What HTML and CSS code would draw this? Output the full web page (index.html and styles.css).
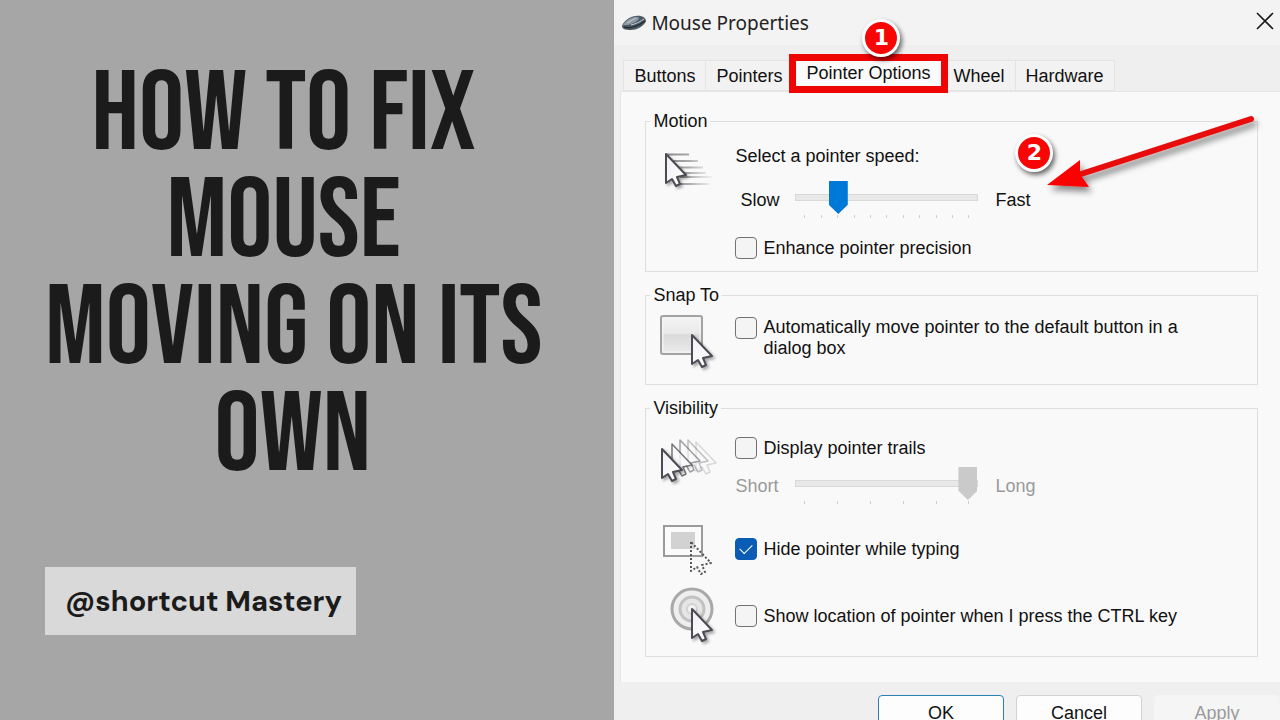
FILE: index.html
```html
<!DOCTYPE html>
<html lang="en">
<head>
<meta charset="utf-8">
<title>How to fix mouse moving on its own</title>
<link rel="stylesheet" href="styles.css">
</head>
<body>
<svg class="defs" aria-hidden="true">
  <defs>
    <linearGradient id="cursor-fill" x1="0" y1="0" x2="1" y2="1">
      <stop offset="0" stop-color="#f1f1f4"/><stop offset="1" stop-color="#ffffff"/>
    </linearGradient>
    <linearGradient id="plate-fill" x1="0" y1="0" x2="0" y2="1">
      <stop offset="0" stop-color="#f4f4f4"/><stop offset=".45" stop-color="#e9e9e9"/><stop offset=".5" stop-color="#dadada"/><stop offset="1" stop-color="#ececec"/>
    </linearGradient>
    <linearGradient id="streak" gradientUnits="userSpaceOnUse" x1="16" y1="0" x2="62" y2="0">
      <stop offset="0" stop-color="#888"/><stop offset=".5" stop-color="#aaa"/><stop offset="1" stop-color="#ccc" stop-opacity=".2"/>
    </linearGradient>
    <filter id="soft" x="-30%" y="-30%" width="170%" height="170%">
      <feDropShadow dx="2" dy="2" stdDeviation="1.5" flood-color="#000" flood-opacity=".35"/>
    </filter>
    <filter id="deep" x="-10%" y="-30%" width="130%" height="180%">
      <feDropShadow dx="3" dy="5" stdDeviation="3" flood-color="#000" flood-opacity=".45"/>
    </filter>
    <path id="cursor" d="M0 0V29L6 25L10 32L14 30L11 23L20 21Z" stroke-linejoin="round"/>
  </defs>
</svg>

<main class="stage">
  <section class="cover">
    <h1 class="headline">HOW TO FIX&nbsp;<br>MOUSE&nbsp;<br>MOVING ON ITS<br>OWN</h1>
    <p class="handle">@shortcut Mastery</p>
  </section>

  <section class="dialog" aria-label="Mouse Properties">
    <header class="titlebar">
      <svg class="app-icon" width="26" height="18" viewBox="0 0 26 18" aria-hidden="true">
        <path d="M1 12C2 8 9 2 15 2C21 1 25 4 25 7C24 11 17 16 10 16C4 16 1 15 1 12Z" fill="#4d5a66"/>
        <path d="M2 11C4 7 10 3 15 3C18 3 19 4 17 6C14 9 7 12 2 11Z" fill="#8d98a3"/>
        <path d="M6 9L15 4M10 11C15 10 20 7 23 5" stroke="#c5ccd3" stroke-width="1" fill="none"/>
        <path d="M3 13C9 15 18 12 24 7" stroke="#252c33" stroke-width="1.5" fill="none"/>
      </svg>
      <h2 class="title">Mouse Properties</h2>
      <button class="close" type="button" aria-label="Close">
        <svg width="18" height="18" viewBox="0 0 18 18" aria-hidden="true"><path d="M1 1L17 17M17 1L1 17" stroke="#1a1a1a" stroke-width="1.6"/></svg>
      </button>
    </header>

    <div class="tabs" role="tablist">
      <button class="tab" type="button" role="tab">Buttons</button>
      <button class="tab" type="button" role="tab">Pointers</button>
      <div class="tab-marked">
        <button class="tab tab-selected" type="button" role="tab" aria-selected="true">Pointer Options</button>
        <span class="badge badge-one">1</span>
      </div>
      <button class="tab" type="button" role="tab">Wheel</button>
      <button class="tab" type="button" role="tab">Hardware</button>
    </div>

    <div class="panel">
      <fieldset class="group">
        <legend>Motion</legend>
        <div class="row row-motion">
          <svg class="icon" viewBox="0 0 72 64" aria-hidden="true">
            <g stroke="url(#streak)" stroke-width="2">
              <path d="M17 15.500H39M20 22H48M24 28.500H53M28 34H56M30 38H62M28 45H59"/>
            </g>
            <use href="#cursor" x="16" y="15" fill="url(#cursor-fill)" stroke="#4c4c54" stroke-width="2" filter="url(#soft)"/>
          </svg>
          <div class="controls">
            <label class="line" for="speed">Select a pointer speed:</label>
            <div class="slider">
              <span class="slider-from indent">Slow</span>
              <div class="slider-body">
                <input id="speed" type="range" min="0" max="10" value="2">
                <div class="ticks"><i></i><i></i><i></i><i></i><i></i><i></i><i></i><i></i><i></i><i></i><i></i></div>
              </div>
              <span>Fast</span>
            </div>
            <label class="check check-after"><input type="checkbox"><span>Enhance pointer precision</span></label>
          </div>
        </div>
      </fieldset>

      <fieldset class="group">
        <legend>Snap To</legend>
        <div class="row row-snap">
          <svg class="icon" viewBox="0 0 72 64" aria-hidden="true">
            <rect x="11" y="6" width="41" height="38" rx="2" fill="url(#plate-fill)" stroke="#a3a3a3" stroke-width="2"/>
            <rect x="13" y="8" width="37" height="34" rx="1" fill="none" stroke="#f6f6f6"/>
            <use href="#cursor" x="42" y="25" fill="url(#cursor-fill)" stroke="#4c4c54" stroke-width="2" filter="url(#soft)"/>
          </svg>
          <div class="controls">
            <label class="check"><input type="checkbox"><span class="wrap">Automatically move pointer to the default button in a dialog box</span></label>
          </div>
        </div>
      </fieldset>

      <fieldset class="group">
        <legend>Visibility</legend>
        <div class="row row-trails">
          <svg class="icon" viewBox="0 0 72 64" aria-hidden="true">
            <g fill="#fafafa" stroke="#55555c" stroke-width="1.500">
              <use href="#cursor" x="46" y="12" opacity=".2"/>
              <use href="#cursor" x="38" y="10" opacity=".35"/>
              <use href="#cursor" x="30" y="10" opacity=".55"/>
              <use href="#cursor" x="22" y="14" opacity=".8"/>
            </g>
            <use href="#cursor" x="12" y="19" fill="url(#cursor-fill)" stroke="#4c4c54" stroke-width="2" filter="url(#soft)"/>
          </svg>
          <div class="controls">
            <label class="check"><input type="checkbox"><span>Display pointer trails</span></label>
            <div class="slider slider-off">
              <label class="slider-from" for="trails">Short</label>
              <div class="slider-body">
                <input id="trails" type="range" min="0" max="5" value="5" disabled>
                <div class="ticks"><i></i><i></i><i></i><i></i><i></i><i></i></div>
              </div>
              <span>Long</span>
            </div>
          </div>
        </div>
        <div class="row row-hide">
          <svg class="icon" viewBox="0 0 72 64" aria-hidden="true">
            <rect x="14" y="9" width="38" height="30" fill="#fbfbfb" stroke="#9b9b9b" stroke-width="2"/>
            <rect x="21" y="15" width="24" height="17" fill="#d2d2d2"/>
            <use href="#cursor" x="41" y="25" fill="none" stroke="#55555a" stroke-width="2" stroke-dasharray="2 2"/>
          </svg>
          <label class="check"><input type="checkbox" checked><span>Hide pointer while typing</span></label>
        </div>
        <div class="row row-locate">
          <svg class="icon" viewBox="0 0 72 64" aria-hidden="true">
            <circle cx="42" cy="25" r="20" fill="#eeeeee" stroke="#a9a9a9" stroke-width="3"/>
            <circle cx="42" cy="25" r="12" fill="#e6e6e6" stroke="#c2c2c2" stroke-width="3"/>
            <circle cx="42" cy="25" r="5" fill="#f2f2f2" stroke="#d2d2d2" stroke-width="2"/>
            <use href="#cursor" x="42" y="25" fill="url(#cursor-fill)" stroke="#4c4c54" stroke-width="2" filter="url(#soft)"/>
          </svg>
          <label class="check"><input type="checkbox"><span>Show location of pointer when I press the CTRL key</span></label>
        </div>
      </fieldset>

      <span class="badge badge-two">2</span>
      <svg class="arrow" width="230" height="100" viewBox="0 0 230 100" aria-hidden="true">
        <g filter="url(#deep)">
          <path d="M38 65L211 9" stroke="#e80c0c" stroke-width="6" stroke-linecap="round"/>
          <path d="M7 75L40 50L40 64L49 77Z" fill="#fb0505"/>
        </g>
      </svg>
    </div>

    <footer class="actions">
      <button class="action action-default" type="button">OK</button>
      <button class="action" type="button">Cancel</button>
      <button class="action" type="button" disabled>Apply</button>
    </footer>
  </section>
</main>
</body>
</html>
```

FILE: styles.css
```css
* {
  box-sizing: border-box;
}

body {
  margin: 0;
  font: 18px/20px "Liberation Sans", Arial, sans-serif;
  color: #111;
  background: #efefef;
}

button,
input {
  font: inherit;
  color: inherit;
}

.defs {
  position: absolute;
  width: 0;
  height: 0;
}

.stage {
  display: flex;
  height: 100vh;
  overflow: hidden;
}

.cover {
  flex: 0 0 48%;
  min-width: 0;
  padding: 62px 28px 0 45px;
  background: #a6a6a6;
  color: #1b1b1b;
}

.headline {
  margin: 0 46px 0 0;
  font: normal 113px/107px "Bebas Neue", "Liberation Sans", sans-serif;
  text-align: center;
  white-space: nowrap;
}

.handle {
  display: inline-block;
  margin: 77px 0 0;
  padding: 17px 14px 17px 20px;
  background: #d9d9d9;
  font: bold 29px/34px "DM Sans", Inter, "Liberation Sans", sans-serif;
  white-space: nowrap;
}

.dialog {
  flex: 1;
  min-width: 0;
  display: flex;
  flex-direction: column;
  background: #efefef;
}

.titlebar {
  flex: none;
  display: flex;
  align-items: center;
  gap: 4px;
  height: 45px;
  padding: 0 6px 0 7px;
  background: #f3f3f3;
}

.title {
  flex: 1;
  margin: 0;
  font: 19px/28px "Noto Sans", sans-serif;
  color: #222;
}

.close {
  display: flex;
  padding: 0 0 4px;
  border: 0;
  background: none;
}

.tabs {
  flex: none;
  display: flex;
  align-items: flex-end;
  height: 46px;
  padding-left: 9px;
}

.tab {
  height: 31px;
  padding: 0 10px;
  border: 1px solid #e4e4e4;
  border-left-width: 0;
  background: #f2f2f2;
  white-space: nowrap;
}

.tabs > .tab:first-child {
  border-left-width: 1px;
}

.tab-marked {
  position: relative;
  z-index: 1;
  margin: 0 -4px -2px;
}

.tab-selected {
  display: block;
  height: 39px;
  padding: 0 10px 2px;
  border: 7px solid #f00505;
  background: #fafafa;
}

.badge {
  position: absolute;
  display: flex;
  align-items: center;
  justify-content: center;
  width: 38px;
  height: 38px;
  border: 3px solid #fff;
  border-radius: 50%;
  background: #f80606;
  box-shadow: 2px 3px 5px rgba(0, 0, 0, 0.6);
  color: #fff;
  font: bold 22px/28px "DejaVu Sans", sans-serif;
}

.badge-one {
  left: 73px;
  top: -35px;
}

.badge-two {
  left: 394px;
  top: 42px;
}

.panel {
  position: relative;
  flex: none;
  display: flex;
  flex-direction: column;
  gap: 13px;
  margin-left: 6px;
  padding: 19px 22px 25px 24px;
  border: 1px solid #e6e6e6;
  border-width: 1px 0 0 1px;
  background: #f9f9f9;
}

.group {
  margin: 0;
  padding: 0 4px;
  border: 1px solid #dedede;
}

.group legend {
  padding: 0 3px;
}

.row {
  display: grid;
  grid-template-columns: 72px 1fr;
  column-gap: 13px;
}

.row-motion {
  padding: 8px 0 12px;
}

.row-snap {
  padding: 5px 0 10px;
}

.row-trails {
  padding: 12px 0 13px;
}

.row-hide,
.row-locate {
  align-items: center;
}

.row-hide {
  padding-bottom: 3px;
}

.row-locate {
  padding-bottom: 8px;
}

.icon {
  width: 72px;
  height: 64px;
}

.controls {
  display: flex;
  flex-direction: column;
  padding-top: 7px;
}

.slider {
  display: grid;
  grid-template-columns: 60px 183px auto;
  align-items: center;
  margin-top: 15px;
}

.slider > :last-child {
  padding-left: 17px;
}

.indent {
  padding-left: 5px;
}

.slider-off {
  margin-top: 8px;
  color: #9a9a9a;
}

input[type="range"] {
  appearance: none;
  display: block;
  width: 100%;
  height: 33px;
  margin: 0;
  background: none;
}

input[type="range"]::-webkit-slider-runnable-track {
  height: 7px;
  border: 1px solid #d9d9d9;
  background: #e8e8e8;
}

input[type="range"]::-webkit-slider-thumb {
  appearance: none;
  width: 19px;
  height: 33px;
  margin-top: -14px;
  background: #0078d7;
  clip-path: polygon(0 0, 100% 0, 100% 72%, 50% 100%, 0 72%);
}

input[type="range"]:disabled::-webkit-slider-thumb {
  background: #cacaca;
}

.ticks {
  display: flex;
  justify-content: space-between;
  padding: 1px 9px 0;
}

.ticks i {
  width: 1px;
  height: 3px;
  background: #cfcfcf;
}

.check {
  display: flex;
  align-items: flex-start;
  gap: 6px;
  line-height: 22px;
}

.check-after {
  margin-top: 19px;
}

.wrap {
  max-width: 440px;
  line-height: 21px;
}

input[type="checkbox"] {
  appearance: none;
  flex: none;
  display: grid;
  place-items: center;
  width: 22px;
  height: 22px;
  margin: 0;
  border: 1px solid #727272;
  border-radius: 4px;
  background: #f4f4f4;
}

input[type="checkbox"]:checked {
  border-color: #0a5cb4;
  background: #0a5cb4;
}

input[type="checkbox"]:checked::after {
  content: "";
  width: 11px;
  height: 6px;
  margin-bottom: 4px;
  border: solid #fff;
  border-width: 0 0 1px 1px;
  transform: rotate(-45deg);
}

.arrow {
  position: absolute;
  left: 419px;
  top: 18px;
}

.actions {
  flex: none;
  display: flex;
  justify-content: flex-end;
  gap: 12px;
  padding-top: 13px;
}

.action {
  width: 126px;
  height: 36px;
  border: 1px solid #d2d2d2;
  border-radius: 4px;
  background: #fdfdfd;
}

.action-default {
  border-color: #2a7fb5;
}

.action:disabled {
  border-color: #f4f4f4;
  background: #f5f5f5;
  color: #9a9a9a;
}
```
